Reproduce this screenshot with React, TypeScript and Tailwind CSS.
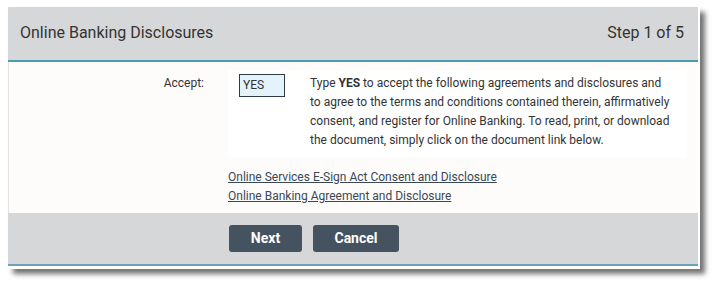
import React, { useState } from 'react';

const links = [
  'Online Services E-Sign Act Consent and Disclosure',
  'Online Banking Agreement and Disclosure',
];

export default function App() {
  const [accept, setAccept] = useState('YES');

  return (
    <div className="min-h-screen bg-white pl-[8px] pt-[7px] font-['Roboto',sans-serif] text-[#333]">
      <div className="w-[692px] border-r-2 border-b-[3px] border-white shadow-[5px_5px_5px_rgba(0,0,0,0.55)]">
        {/* header */}
        <div className="flex h-[55px] items-center justify-between border-b-2 border-[#4b9bb2] bg-[#d6d7d9] pb-[2px] pl-[12px] pr-[14px] text-[16px]">
          <span>Online Banking Disclosures</span>
          <span>Step 1 of 5</span>
        </div>

        {/* body */}
        <div className="h-[151px] border-l border-[#e2e2e2] bg-[#fdfcfb] pt-[8px]">
          <div className="flex">
            <div className="w-[195px] pt-[4px] text-right text-[12px]">Accept:</div>
            <div className="ml-[24px] flex h-[87px] w-[459px] bg-white pl-[11px] pt-[4px]">
              <div className="h-[23px] w-[46px] shrink-0 border border-[#2d3b49] bg-[#e4f2f9] pl-[3px] text-[12px] leading-[21px] text-[#333]">
                <input
                  value={accept}
                  onChange={(e) => setAccept(e.target.value)}
                  className="w-full bg-transparent outline-none caret-black"
                />
              </div>
              <p className="ml-[25px] whitespace-nowrap text-[12px] leading-[19px]">
                Type <b>YES</b> to accept the following agreements and disclosures and
                <br />
                to agree to the terms and conditions contained therein, affirmatively
                <br />
                consent, and register for Online Banking. To read, print, or download
                <br />
                the document, simply click on the document link below.
              </p>
            </div>
          </div>
          <div className="ml-[219px] mt-[11px] flex flex-col text-[12px] leading-[19px]">
            {links.map((l) => (
              <a key={l} href="#" className="w-fit text-[#3a4856] underline">
                {l}
              </a>
            ))}
          </div>
        </div>

        {/* footer */}
        <div className="flex h-[53px] items-center gap-[11px] border-b-2 border-[#6ca1b9] bg-[#d6d7d9] pl-[221px]">
          <button className="h-[27px] w-[73px] rounded-[3px] bg-[#45525f] text-[14px] font-bold text-white">
            Next
          </button>
          <button className="h-[27px] w-[86px] rounded-[3px] bg-[#45525f] text-[14px] font-bold text-white">
            Cancel
          </button>
        </div>
      </div>
    </div>
  );
}
